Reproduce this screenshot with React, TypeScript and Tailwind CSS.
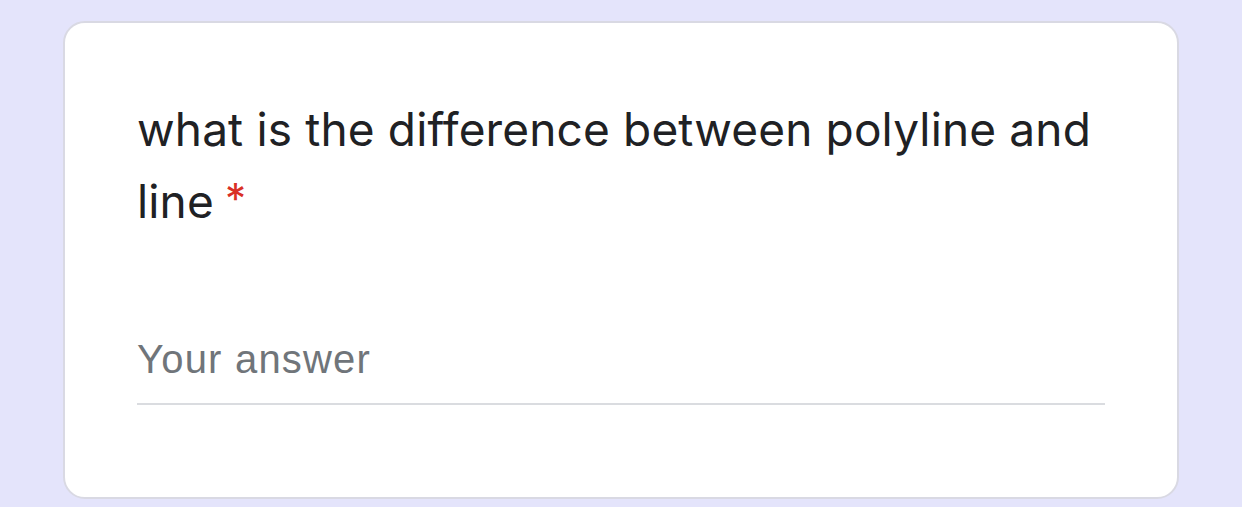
export default function App() {
  return (
    <div className="min-h-[507px] bg-[#e4e4fb] pl-[63px] pt-[21px]">
      <div className="h-[478px] w-[1116px] rounded-[22px] border-2 border-[#d9d9e3] bg-white px-[72px] pt-[70px]">
        {/* Question */}
        <div
          className="text-[46px] leading-[72px] tracking-[0.15px] text-[#202124]"
          style={{ fontFamily: "Inter, 'Open Sans', sans-serif" }}
        >
          what is the difference between polyline and line{" "}
          <span className="-ml-[2px] inline-block -translate-y-[4px] text-[42px] leading-[40px] text-[#d93025]">*</span>
        </div>

        {/* Answer field */}
        <div className="mt-[102px] w-[968px] border-b-2 border-[#dadce0] pb-[24px]">
          <span
            className="text-[40px] leading-[40px] tracking-[1.2px] text-[#70757a]"
            style={{ fontFamily: "'Liberation Sans', Arial, sans-serif" }}
          >
            Your answer
          </span>
        </div>
      </div>
    </div>
  );
}
